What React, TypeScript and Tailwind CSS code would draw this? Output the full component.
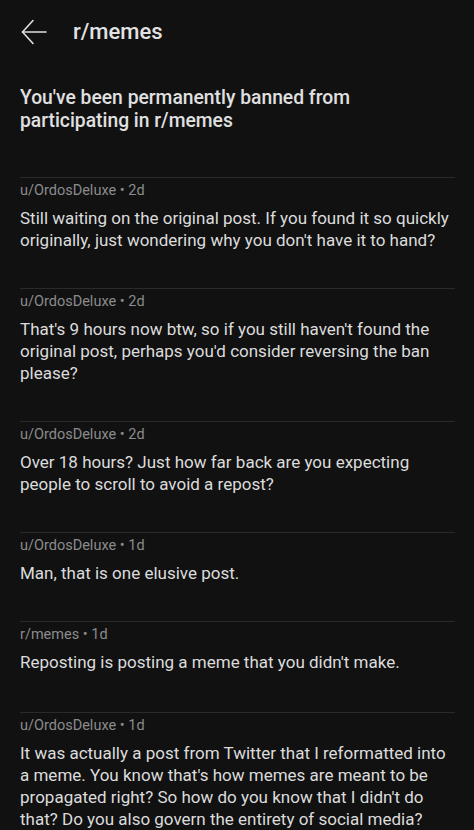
import React from "react";

const items = [
  { who: "u/OrdosDeluxe", when: "2d", text: "Still waiting on the original post. If you found it so quickly originally, just wondering why you don't have it to hand?" },
  { who: "u/OrdosDeluxe", when: "2d", text: "That's 9 hours now btw, so if you still haven't found the original post, perhaps you'd consider reversing the ban please?" },
  { who: "u/OrdosDeluxe", when: "2d", text: "Over 18 hours? Just how far back are you expecting people to scroll to avoid a repost?" },
  { who: "u/OrdosDeluxe", when: "1d", text: "Man, that is one elusive post." },
  { who: "r/memes", when: "1d", text: "Reposting is posting a meme that you didn't make." },
  { who: "u/OrdosDeluxe", when: "1d", text: "It was actually a post from Twitter that I reformatted into a meme. You know that's how memes are meant to be propagated right? So how do you know that I didn't do that? Do you also govern the entirety of social media?" },
];

export default function App() {
  return (
    <div className="w-[474px] h-[830px] overflow-hidden bg-[#111112] text-[#d8d8d8]" style={{ fontFamily: "Roboto, 'Noto Sans', sans-serif" }}>
      <div className="flex items-center h-[64px] pl-[21px]">
        <svg width="26" height="26" viewBox="0 0 26 26" fill="none" stroke="#e0e0e0" strokeWidth="1.6" strokeLinecap="round" strokeLinejoin="round">
          <path d="M25 13H1.5" />
          <path d="M12 1.5L1.5 13L12 24.5" />
        </svg>
        <div className="ml-[26px] text-[22px] font-medium text-[#e2e2e2] leading-[26px]">r/memes</div>
      </div>
      <div className="px-[20px] pt-[22px] pb-[45px] text-[19.3px] leading-[23px] font-medium text-[#e0e0e0]">
        <div className="max-w-[380px]">You've been permanently banned from participating in r/memes</div>
      </div>
      <div className="px-[20px] pr-[19px]">
        {items.map((it, i) => (
          <div key={i} className={`border-t border-[#2a2a2b] pt-[4px] ${i === 4 ? "pb-[39px]" : "pb-[37px]"}`}>
            <div className="text-[14.5px] leading-[18px] text-[#8b8b8c]">
              {it.who} • {it.when}
            </div>
            <div className="mt-[7px] text-[17px] leading-[22px] text-[#dcdcdc]">{it.text}</div>
          </div>
        ))}
      </div>
    </div>
  );
}
